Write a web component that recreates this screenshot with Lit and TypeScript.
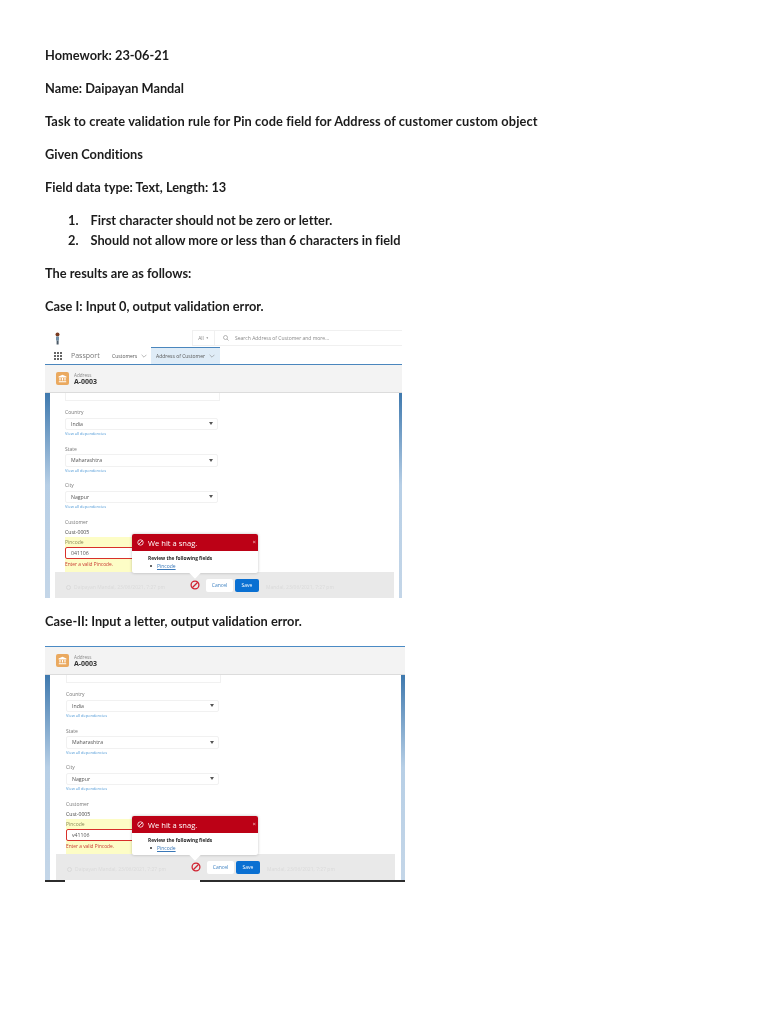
import { LitElement, html, css, svg, nothing } from "lit";
import { customElement, property } from "lit/decorators.js";

const chevron = svg`<svg class="chev" viewBox="0 0 10 6" width="6" height="4"><path d="M1 1l4 4 4-4" fill="none" stroke="#8a8a8a" stroke-width="1"/></svg>`;

@customElement("sf-select")
class SfSelect extends LitElement {
  @property() label = "";
  @property() value = "";
  static styles = css`
    :host { display: block; width: 153px; font-weight: 400; }
    .label { font-size: 5px; line-height: 7px; color: #777; height: 7px; }
    .box { height: 10.4px; margin-top: 1.6px; border: 1px solid #f1f1f1; border-radius: 2px; background: #fff; display: flex; align-items: center; justify-content: space-between; padding: 0 4px 0 5px; font-size: 5.2px; color: #555; }
    .tri { width: 0; height: 0; border-left: 2px solid transparent; border-right: 2px solid transparent; border-top: 3px solid #555; }
    .link { font-size: 4px; line-height: 6px; color: #4a97d6; margin-top: 1px; }
  `;
  render() {
    return html`<div class="label">${this.label}</div>
      <div class="box"><span>${this.value}</span><span class="tri"></span></div>
      <div class="link">View all dependencies</div>`;
  }
}

@customElement("sf-record")
class SfRecord extends LitElement {
  @property() pin = "";
  @property({ type: Boolean, reflect: true }) nav = false;
  static styles = css`
    :host { display: block; font-family: "Open Sans", "Liberation Sans", sans-serif; font-weight: 400; filter: blur(0.45px); background: #fff; --form-pad: 16px; --foot-l: 6px; --foot-r: 6px; --strip-r: 4px; }
    :host([nav]) { --form-pad: 15px; --foot-l: 5px; --foot-r: 5px; --strip-r: 3px; }
    .top { height: 18px; display: flex; align-items: center; justify-content: space-between; }
    .logo { margin-left: 9px; }
    .search { width: 209px; height: 14px; border: 1px solid #f0f0f0; border-right: none; display: flex; align-items: center; font-size: 5px; color: #888; }
    .all { width: 21px; border-right: 1px solid #f0f0f0; height: 14px; display: flex; align-items: center; justify-content: center; gap: 2px; }
    .mag { margin: 0 6px 0 8px; }
    .navrow { height: 18px; display: flex; align-items: center; border-bottom: 1.5px solid #4a86bd; box-sizing: border-box; }
    .apps { display: grid; grid-template-columns: repeat(3, 2px); gap: 1px; margin: 0 9px 0 9px; }
    .apps i { width: 2px; height: 2px; background: #666; display: block; }
    .app { font-size: 7px; color: #777; width: 41px; }
    .tab { font-size: 5px; color: #555; display: flex; align-items: center; gap: 4px; height: 100%; }
    .tab.first { width: 39px; }
    .tab.active { width: 69px; justify-content: center; background: #dfecf7; border-top: 1.5px solid #4a86bd; box-sizing: border-box; }
    .head { height: 28px; background: #f3f3f3; display: flex; align-items: center; gap: 5px; padding-left: 11px; border-bottom: 1px solid #dcdcdc; box-sizing: border-box; }
    .head.lined { border-top: 1.5px solid #4a8ac4; height: 29px; }
    .ico { width: 13px; height: 13px; border-radius: 2px; background: #eaa95f; display: flex; align-items: center; justify-content: center; }
    .obj { font-size: 4.6px; line-height: 6px; color: #888; }
    .name { font-size: 7px; line-height: 8px; font-weight: 700; color: #333; }
    .body { height: 205px; display: flex; position: relative; }
    .strip { width: 5px; flex: none; background: linear-gradient(#3f79ae, #b7cfe6 45%, #c4d6e8); }
    .strip.r { width: var(--strip-r); }
    .main { flex: 1; display: flex; flex-direction: column; min-width: 0; }
    .form { flex: 1; padding-left: var(--form-pad); }
    .ta { width: 153px; height: 7px; border: 1px solid #f1f1f1; border-top: none; margin-bottom: 8px; }
    sf-select { margin-bottom: 8.6px; }
    .cust { font-size: 5px; line-height: 7px; color: #777; }
    .custv { font-size: 5.2px; line-height: 7px; color: #444; margin-top: 3px; margin-bottom: 1.5px; }
    .pin { width: 153px; height: 34.3px; background: #fdfdc6; }
    .pinl { font-size: 5px; line-height: 10px; color: #8a8a5a; }
    .pini { height: 10px; border: 1.5px solid #d8302a; border-radius: 2px; background: #fff; font-size: 5.2px; color: #555; display: flex; align-items: center; padding-left: 5px; }
    .pine { font-size: 4.8px; line-height: 9px; color: #c8352f; margin-top: .5px; }
    .foot { height: 26px; margin-left: var(--foot-l); margin-right: var(--foot-r); background: #e9e9e9; display: grid; grid-template-columns: 1fr auto 1fr; align-items: center; font-size: 5px; color: #dadada; }
    .foot .left { padding-left: 11px; display: flex; align-items: center; gap: 3px; padding-top: 4px; }
    .foot .left i { width: 5px; height: 5px; border: 1px solid #dadada; border-radius: 50%; box-sizing: border-box; }
    .foot .right { padding-left: 7px; padding-top: 4px; }
    .actions { display: flex; align-items: center; gap: 2px; }
    .err { margin-right: 4px; display: block; }
    .btn { height: 13px; border-radius: 2px; display: flex; align-items: center; justify-content: center; font-size: 5px; }
    .cancel { width: 27px; background: #fff; color: #3a7fc0; }
    .save { width: 24px; background: #0a70d2; color: #fff; }
    .pop { position: absolute; left: 87px; top: 141px; width: 126px; background: #fff; box-shadow: 0 0 3px rgba(0,0,0,.25); border-radius: 2px; height: 39px; }
    .pop::after { content: ""; position: absolute; left: 59px; bottom: -4px; width: 8px; height: 8px; background: #fff; transform: rotate(45deg); }
    .pophead { height: 17px; background: #bc0116; color: #fff; font-size: 7.6px; display: flex; align-items: center; padding-left: 5px; gap: 4px; position: relative; border-radius: 2px 2px 0 0; }
    .x { position: absolute; right: 2px; top: 4px; font-size: 6px; line-height: 8px; color: #f4c5c5; }
    .rev { font-size: 4.8px; font-weight: 700; color: #222; line-height: 8px; margin: 3px 0 0 16px; }
    .li { font-size: 5px; line-height: 8px; margin-left: 18px; display: flex; align-items: center; gap: 5px; position: relative; z-index: 1; }
    .li i { width: 2px; height: 2px; border-radius: 50%; background: #333; }
    .li span { color: #3a78b8; text-decoration: underline; }
  `;
  render() {
    return html`
      ${this.nav ? html`
        <div class="top">
          <svg class="logo" width="7" height="13" viewBox="0 0 7 13"><circle cx="3.5" cy="2.5" r="2" fill="#7a3b20"/><rect x="2" y="4.5" width="3" height="4" fill="#6f8fa8"/><rect x="2.6" y="8.5" width="2" height="4" fill="#4b5a68"/></svg>
          <div class="search"><span class="all">All <span style="font-size:3px">▼</span></span>
            <svg class="mag" width="6" height="6" viewBox="0 0 6 6"><circle cx="2.5" cy="2.5" r="2" fill="none" stroke="#888" stroke-width=".6"/><path d="M4 4l1.6 1.6" stroke="#888" stroke-width=".6"/></svg>
            <span>Search Address of Customer and more...</span></div>
        </div>
        <div class="navrow">
          <div class="apps">${Array.from({ length: 9 }, () => html`<i></i>`)}</div>
          <span class="app">Passport</span>
          <span class="tab first">Customers ${chevron}</span>
          <span class="tab active">Address of Customer ${chevron}</span>
        </div>` : nothing}
      <div class="head ${this.nav ? "" : "lined"}">
        <div class="ico"><svg width="9" height="9" viewBox="0 0 9 9"><path d="M4.5 .8L8.4 2.6V3.4H.6V2.6zM1.4 4h1.2v2.6H1.4zM3.9 4h1.2v2.6H3.9zM6.4 4h1.2v2.6H6.4zM.8 7.2h7.4v1H.8z" fill="#fff"/></svg></div>
        <div><div class="obj">Address</div><div class="name">A-0003</div></div>
      </div>
      <div class="body">
        <div class="strip"></div>
        <div class="main">
          <div class="form">
            <div class="ta"></div>
            <sf-select label="Country" value="India"></sf-select>
            <sf-select label="State" value="Maharashtra"></sf-select>
            <sf-select label="City" value="Nagpur"></sf-select>
            <div class="cust">Customer</div>
            <div class="custv">Cust-0005</div>
            <div class="pin">
              <div class="pinl">Pincode</div>
              <div class="pini">${this.pin}</div>
              <div class="pine">Enter a valid Pincode.</div>
            </div>
          </div>
          <div class="foot">
            <div class="left"><i></i><span>Daipayan Mandal, 23/06/2021, 7:27 pm</span></div>
            <div class="actions">
              <svg class="err" width="10" height="10" viewBox="0 0 11 11"><circle cx="5.5" cy="5.5" r="4.3" fill="none" stroke="#d0212f" stroke-width="1.4"/><path d="M2.5 8.5l6-6" stroke="#d0212f" stroke-width="1.4"/></svg>
              <div class="btn cancel">Cancel</div>
              <div class="btn save">Save</div>
            </div>
            <div class="right">Mandal, 23/06/2021, 7:27 pm</div>
          </div>
        </div>
        <div class="strip r"></div>
        <div class="pop">
          <div class="pophead">
            <svg width="7" height="7" viewBox="0 0 7 7"><circle cx="3.5" cy="3.5" r="2.7" fill="none" stroke="#fff" stroke-width=".8"/><path d="M1.7 5.3l3.6-3.6" stroke="#fff" stroke-width=".8"/></svg>
            <span>We hit a snag.</span><span class="x">×</span>
          </div>
          <div class="rev">Review the following fields</div>
          <div class="li"><i></i><span>Pincode</span></div>
        </div>
      </div>`;
  }
}

@customElement("app-root")
class AppRoot extends LitElement {
  static styles = css`
    :host { display: block; height: 1024px; background: #fff; font-family: Lato, "Open Sans", sans-serif; font-size: 12.8px; font-weight: 700; color: #1c1c1c; box-sizing: border-box; padding: 39px 0 0 45px; font-variant-ligatures: none; }
    p { margin: 0; line-height: 33px; white-space: nowrap; filter: blur(0.25px); }
    p.wide { letter-spacing: .087px; }
    ol { list-style: none; margin: 6px 0 6.5px; padding: 0 0 0 23px; filter: blur(0.25px); }
    li { line-height: 20px; display: flex; gap: 12px; }
    .fig1 { width: 357px; margin-top: 6.5px; }
    .fig2 { width: 360px; margin-top: 8.5px; }
    .cap { margin-top: 6.5px; }
    .rule { width: 360px; height: 2px; display: flex; justify-content: space-between; }
    .rule i { background: #2c2c2c; display: block; }
    .rule .a { width: 20px; }
    .rule .b { width: 205px; }
  `;
  render() {
    return html`
      <p>Homework: 23-06-21</p>
      <p>Name: Daipayan Mandal</p>
      <p class="wide">Task to create validation rule for Pin code field for Address of customer custom object</p>
      <p>Given Conditions</p>
      <p>Field data type: Text, Length: 13</p>
      <ol>
        <li><span>1.</span><span>First character should not be zero or letter.</span></li>
        <li><span>2.</span><span>Should not allow more or less than 6 characters in field</span></li>
      </ol>
      <p>The results are as follows:</p>
      <p>Case I: Input 0, output validation error.</p>
      <sf-record class="fig1" nav pin="041106"></sf-record>
      <p class="cap">Case-II: Input a letter, output validation error.</p>
      <sf-record class="fig2" pin="v41106"></sf-record>
      <div class="rule"><i class="a"></i><i class="b"></i></div>
    `;
  }
}
